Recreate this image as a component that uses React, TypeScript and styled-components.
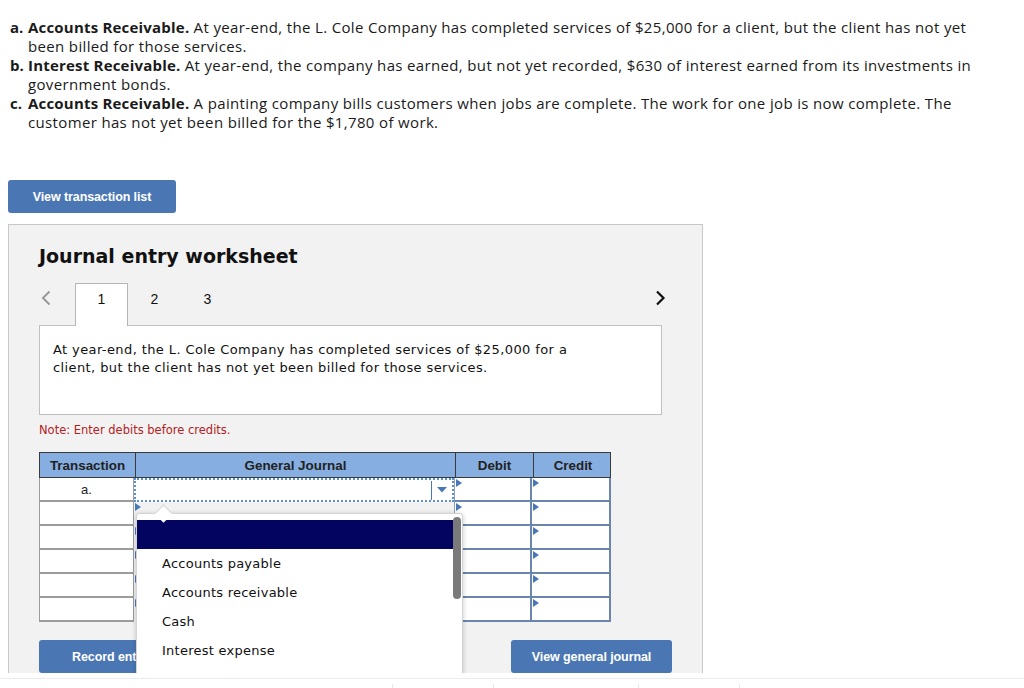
import React from "react";
import styled, { createGlobalStyle } from "styled-components";

const Global = createGlobalStyle`
  html, body { margin: 0; padding: 0; background: #ffffff; overflow: hidden; }
  * { box-sizing: border-box; }
`;

const Viewport = styled.div`
  height: 673px;
  overflow: hidden;
  padding: 18px 8px 0 8px;
`;

const ProblemList = styled.ol`
  list-style: none;
  margin: 0;
  padding: 0 0 0 2px;
  font-family: "Open Sans", Lato, sans-serif;
  font-size: 15px;
  letter-spacing: 0.35px;
  line-height: 19px;
  color: #1a1a1a;
  max-width: 975px;
`;

const ProblemItem = styled.li`
  display: flex;
`;

const ProblemLabel = styled.span`
  flex: 0 0 18px;
  font-weight: 700;
  letter-spacing: 0;
`;

const ProblemText = styled.span`
  flex: 1;
  b { font-weight: 700; letter-spacing: 0.2px; }
`;

const BlueButton = styled.button<{ $w: number }>`
  width: ${(p) => p.$w}px;
  height: 33px;
  border: none;
  border-radius: 3px;
  background: #4a77b4;
  color: #ffffff;
  font-family: "Liberation Sans", Arial, sans-serif;
  font-weight: 700;
  font-size: 12.5px;
  letter-spacing: -0.1px;
  padding: 0;
  cursor: pointer;
`;

const TopButtonWrap = styled.div`
  margin-top: 48px;
`;

const Panel = styled.section`
  margin-top: 11px;
  width: 695px;
  height: 600px;
  background: #f2f2f2;
  border: 1px solid #c8c8c8;
  padding: 20px 0 0 30px;
`;

const Title = styled.h2`
  margin: 0;
  font-family: "DejaVu Sans", Verdana, sans-serif;
  font-weight: 700;
  font-size: 19px;
  line-height: 22px;
  color: #111;
`;

const TabsRow = styled.div`
  margin-top: 16px;
  display: flex;
  align-items: flex-start;
  width: 630px;
  height: 42px;
`;

const ArrowBtn = styled.div<{ $right?: boolean }>`
  width: 36px;
  height: 30px;
  display: flex;
  align-items: center;
  justify-content: ${(p) => (p.$right ? "flex-end" : "flex-start")};
  padding-left: ${(p) => (p.$right ? 0 : 2)}px;
  ${(p) => (p.$right ? "margin-left: auto;" : "")}
`;

const Tab = styled.div<{ $active?: boolean }>`
  width: 53px;
  height: 43px;
  padding-top: 7px;
  text-align: center;
  font-family: "Liberation Sans", Arial, sans-serif;
  font-size: 14px;
  line-height: 16px;
  color: #111;
  background: ${(p) => (p.$active ? "#ffffff" : "transparent")};
  border: 1px solid ${(p) => (p.$active ? "#b5b5b5" : "transparent")};
  border-bottom: none;
  position: relative;
  z-index: 1;
`;

const Description = styled.div`
  width: 623px;
  height: 90px;
  background: #ffffff;
  border: 1px solid #c0c0c0;
  padding: 15px 0 0 13px;
  font-family: "DejaVu Sans", Verdana, sans-serif;
  font-size: 13px;
  letter-spacing: 0.4px;
  line-height: 18px;
  color: #111;
`;

const DescText = styled.p`
  margin: 0;
  max-width: 525px;
`;

const Note = styled.div`
  margin-top: 8px;
  font-family: "DejaVu Sans", Verdana, sans-serif;
  font-size: 11.5px;
  letter-spacing: 0;
  line-height: 14px;
  color: #b3211e;
`;

const TableWrap = styled.div`
  position: relative;
  margin-top: 15px;
  width: 572px;
`;

const cols = "95px 320px 78px 79px";

const HeaderRow = styled.div`
  display: grid;
  grid-template-columns: ${cols};
  height: 26px;
  background: #86aee0;
  border: 1px solid #3a3a3a;
`;

const HeadCell = styled.div<{ $first?: boolean }>`
  display: flex;
  align-items: center;
  justify-content: center;
  font-family: "Liberation Sans", Arial, sans-serif;
  font-weight: 700;
  font-size: 13.4px;
  color: #222;
  border-left: ${(p) => (p.$first ? "none" : "1px solid #3a3a3a")};
`;

const BodyRow = styled.div`
  display: grid;
  grid-template-columns: ${cols};
  height: 24px;
`;

const TxCell = styled.div`
  background: #ffffff;
  border: 1px solid #9c9c9c;
  border-top: none;
  border-bottom-width: 2px;
  display: flex;
  align-items: center;
  justify-content: center;
  font-family: "Liberation Sans", Arial, sans-serif;
  font-size: 13px;
  color: #222;
`;

const Marker = styled.span`
  position: absolute;
  left: 1px;
  top: 1px;
  width: 0;
  height: 0;
  border-top: 4px solid transparent;
  border-bottom: 4px solid transparent;
  border-left: 6px solid #4a78b5;
`;

const GjCell = styled.div<{ $focus?: boolean }>`
  position: relative;
  background: ${(p) => (p.$focus ? "#ffffff" : "transparent")};
  border: ${(p) => (p.$focus ? "2px dotted #5d8fd1" : "none")};
  display: flex;
  justify-content: flex-end;
  align-items: center;
`;

const SelectToggle = styled.div`
  width: 21px;
  height: 19px;
  border-left: 1px solid #4a78b5;
  display: flex;
  align-items: center;
  justify-content: center;
`;

const AmountCell = styled.div<{ $debit?: boolean }>`
  position: relative;
  background: #ffffff;
  border-right: 2px solid #6a86ae;
  border-bottom: 2px solid #6a86ae;
  border-left: ${(p) => (p.$debit ? "1px solid #8aa3c4" : "none")};
`;

const Popup = styled.div`
  position: absolute;
  left: 97px;
  top: 61px;
  width: 327px;
  height: 220px;
  background: #ffffff;
  border: 1px solid #d4d4d4;
  border-radius: 3px;
  box-shadow: 0 1px 5px rgba(0, 0, 0, 0.22);
  padding-top: 6px;
  z-index: 5;
`;

const Notch = styled.span`
  position: absolute;
  left: 20px;
  top: -7px;
  width: 13px;
  height: 13px;
  background: #ffffff;
  border-left: 1px solid #d4d4d4;
  border-top: 1px solid #d4d4d4;
  transform: rotate(45deg);
`;

const OptionList = styled.ul`
  list-style: none;
  margin: 0;
  padding: 0;
  width: 317px;
`;

const Option = styled.li<{ $selected?: boolean }>`
  height: 29px;
  padding-left: 25px;
  display: flex;
  align-items: center;
  background: ${(p) => (p.$selected ? "#03045f" : "transparent")};
  font-family: "DejaVu Sans", Verdana, sans-serif;
  font-size: 13px;
  letter-spacing: 0.25px;
  color: #111;
`;

const ScrollThumb = styled.span`
  position: absolute;
  right: 1px;
  top: 3px;
  width: 8px;
  height: 82px;
  border-radius: 4px;
  background: #7a7a7a;
`;

const ButtonRow = styled.div`
  margin-top: 18px;
  width: 633px;
  display: flex;
  justify-content: space-between;
`;

const Footer = styled.div`
  height: 15px;
  padding-top: 5px;
`;

const FooterLine = styled.div`
  height: 10px;
  border-top: 1px solid #ececec;
  display: flex;
`;

const FooterTick = styled.span<{ $x: number }>`
  margin-left: ${(p) => p.$x}px;
  width: 1px;
  height: 4px;
  margin-top: 5px;
  background: #e6e6e6;
`;

const problems = [
  {
    label: "a.",
    title: "Accounts Receivable.",
    text: " At year-end, the L. Cole Company has completed services of $25,000 for a client, but the client has not yet been billed for those services.",
  },
  {
    label: "b.",
    title: "Interest Receivable.",
    text: " At year-end, the company has earned, but not yet recorded, $630 of interest earned from its investments in government bonds.",
  },
  {
    label: "c.",
    title: "Accounts Receivable.",
    text: " A painting company bills customers when jobs are complete. The work for one job is now complete. The customer has not yet been billed for the $1,780 of work.",
  },
];

const options = ["", "Accounts payable", "Accounts receivable", "Cash", "Interest expense", "Interest receivable"];

export default function App() {
  return (
    <>
      <Global />
      <Viewport>
        <ProblemList>
          {problems.map((p) => (
            <ProblemItem key={p.label}>
              <ProblemLabel>{p.label}</ProblemLabel>
              <ProblemText>
                <b>{p.title}</b>
                {p.text}
              </ProblemText>
            </ProblemItem>
          ))}
        </ProblemList>

        <TopButtonWrap>
          <BlueButton $w={168}>View transaction list</BlueButton>
        </TopButtonWrap>

        <Panel>
          <Title>Journal entry worksheet</Title>
          <TabsRow>
            <ArrowBtn>
              <svg width="10" height="16" viewBox="0 0 10 16">
                <path d="M8.5 1.5 L2 8 L8.5 14.5" fill="none" stroke="#9a9a9a" strokeWidth="2" />
              </svg>
            </ArrowBtn>
            <Tab $active>1</Tab>
            <Tab>2</Tab>
            <Tab>3</Tab>
            <ArrowBtn $right>
              <svg width="12" height="16" viewBox="0 0 12 16" style={{ marginRight: 2 }}>
                <path d="M2 1.5 L8.5 8 L2 14.5" fill="none" stroke="#111" strokeWidth="2.2" />
              </svg>
            </ArrowBtn>
          </TabsRow>
          <Description>
            <DescText>
              At year-end, the L. Cole Company has completed services of $25,000 for a client, but the client has not yet
              been billed for those services.
            </DescText>
          </Description>
          <Note>Note: Enter debits before credits.</Note>

          <TableWrap>
            <HeaderRow>
              <HeadCell $first>Transaction</HeadCell>
              <HeadCell>General Journal</HeadCell>
              <HeadCell>Debit</HeadCell>
              <HeadCell>Credit</HeadCell>
            </HeaderRow>
            {[0, 1, 2, 3, 4, 5].map((i) => (
              <BodyRow key={i}>
                <TxCell>{i === 0 ? "a." : ""}</TxCell>
                <GjCell $focus={i === 0}>
                  {i === 0 ? (
                    <SelectToggle>
                      <svg width="10" height="6" viewBox="0 0 10 6">
                        <path d="M0 0 H10 L5 5.5 Z" fill="#4a78b5" />
                      </svg>
                    </SelectToggle>
                  ) : (
                    <Marker />
                  )}
                </GjCell>
                <AmountCell $debit>
                  <Marker />
                </AmountCell>
                <AmountCell>
                  <Marker />
                </AmountCell>
              </BodyRow>
            ))}

            <Popup>
              <Notch />
              <OptionList>
                {options.map((o, i) => (
                  <Option key={i} $selected={i === 0}>
                    {o}
                  </Option>
                ))}
              </OptionList>
              <ScrollThumb />
            </Popup>
          </TableWrap>

          <ButtonRow>
            <BlueButton $w={142}>Record entry</BlueButton>
            <BlueButton $w={161}>View general journal</BlueButton>
          </ButtonRow>
        </Panel>
      </Viewport>
      <Footer>
        <FooterLine>
          <FooterTick $x={392} />
          <FooterTick $x={100} />
          <FooterTick $x={144} />
          <FooterTick $x={100} />
        </FooterLine>
      </Footer>
    </>
  );
}
